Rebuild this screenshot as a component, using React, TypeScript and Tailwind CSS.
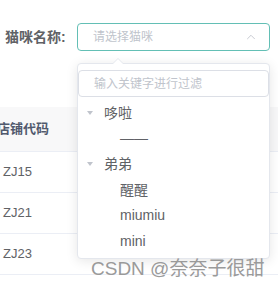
import React from "react";
import { ChevronUp } from "lucide-react";

const rows = ["ZJ15", "ZJ21", "ZJ23"];

function TreeNode({
  label,
  leaf,
}: {
  label: string;
  leaf?: boolean;
}) {
  return (
    <div
      className={`h-[25.6px] flex items-center ${leaf ? "pl-[42px]" : "pl-[9px]"}`}
    >
      {!leaf && (
        <span className="w-0 h-0 mr-[11px] border-l-[3px] border-r-[3px] border-t-[4px] border-l-transparent border-r-transparent border-t-[#c0c4cc]"></span>
      )}
      <span className="text-[14px] text-[#606266] leading-none">{label}</span>
    </div>
  );
}

export default function App() {
  return (
    <div
      className="relative w-[278px] h-[288px] overflow-hidden bg-white"
      style={{ fontFamily: '"Liberation Sans", "Noto Sans CJK SC", sans-serif' }}
    >
      {/* form row */}
      <div className="pt-[23px] flex items-center">
        <label className="w-[77px] pl-[5px] text-[14px] font-bold text-[#606266]">
          猫咪名称:
        </label>
        <div className="w-[193px] h-[28px] pl-[15px] pr-[11px] flex items-center justify-between border border-[#63bfb5] rounded-[4px]">
          <span className="text-[12px] text-[#c0c4cc]">请选择猫咪</span>
          <ChevronUp className="w-[14px] h-[14px] text-[#c0c4cc]" strokeWidth={1.5} />
        </div>
      </div>

      {/* table */}
      <div className="mt-[56px]">
        <div className="h-[45px] flex items-center bg-[#f8f8f9] border-b border-[#ebeef5]">
          <span className="ml-[-3px] text-[13px] font-bold text-[#515a6e]">店铺代码</span>
        </div>
        {rows.map((r) => (
          <div
            key={r}
            className="h-[41px] flex items-center pl-[3px] border-b border-[#ebeef5] text-[13px] text-[#606266]"
          >
            {r}
          </div>
        ))}
      </div>

      {/* dropdown */}
      <div className="absolute left-[77px] top-[63px] w-[193px] h-[196px] bg-white border border-[#e4e7ed] rounded-[4px] shadow-[0_2px_12px_rgba(0,0,0,0.1)]">
        <div className="absolute left-[34px] top-[-6px] w-0 h-0 border-l-[6px] border-r-[6px] border-b-[6px] border-l-transparent border-r-transparent border-b-[#e4e7ed]"></div>
        <div className="absolute left-[35px] top-[-5px] w-0 h-0 border-l-[5px] border-r-[5px] border-b-[5px] border-l-transparent border-r-transparent border-b-white"></div>
        <div className="mt-[6px] h-[27px] px-[15px] flex items-center border border-[#dcdfe6] rounded-[4px]">
          <span className="text-[12px] text-[#c0c4cc]">输入关键字进行过滤</span>
        </div>
        <div className="pt-[3px]">
          <TreeNode label="哆啦" />
          <TreeNode label="——" leaf />
          <TreeNode label="弟弟" />
          <TreeNode label="醒醒" leaf />
          <TreeNode label="miumiu" leaf />
          <TreeNode label="mini" leaf />
        </div>
      </div>

      {/* watermark */}
      <div className="absolute left-[91px] top-[257px] text-[19px] leading-[24px] text-[#9a9a9a] whitespace-nowrap">
        CSDN @奈奈子很甜
      </div>
    </div>
  );
}
